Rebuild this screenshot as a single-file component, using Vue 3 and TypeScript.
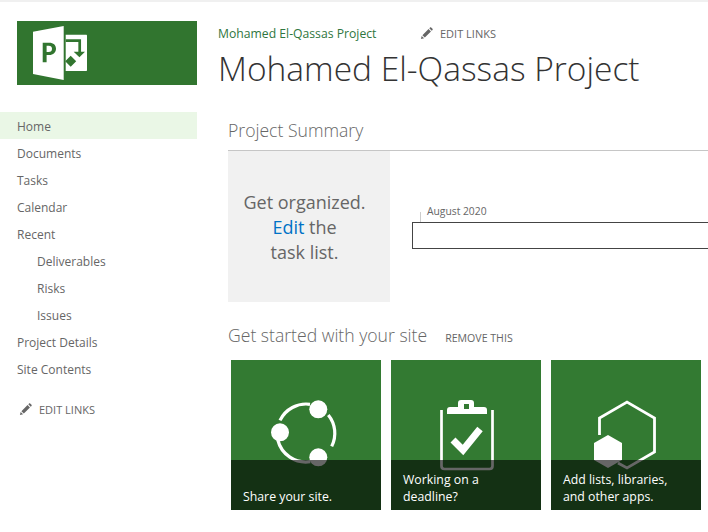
<script setup lang="ts">
interface NavItem {
  label: string;
  sub?: boolean;
  active?: boolean;
}

const navItems: NavItem[] = [
  { label: "Home", active: true },
  { label: "Documents" },
  { label: "Tasks" },
  { label: "Calendar" },
  { label: "Recent" },
  { label: "Deliverables", sub: true },
  { label: "Risks", sub: true },
  { label: "Issues", sub: true },
  { label: "Project Details" },
  { label: "Site Contents" },
];

const pencil = "M1 13l.8-3.4 2.6 2.6zM2.600 8.800l6.600-6.600 2.600 2.600-6.600 6.600zM10 1.400l.9-.9c.3-.3.8-.3 1.100 0l1.500 1.500c.3.3.3.8 0 1.100l-.9.9z";
</script>

<template>
  <div class="page">
    <aside class="side">
      <div class="logo">
        <svg width="56" height="56" viewBox="0 0 56 56">
          <path d="M0 6.700 30.700 1v54L0 49z" fill="#fff" />
          <path d="M9.700 17.700h6.500c4.200 0 6.800 2.300 6.800 6s-2.800 6.300-6.800 6.300h-2.600v7.300H9.700zm3.900 3.100V27h2c2.200 0 3.400-1.100 3.400-3.200s-1.200-3-3.300-3z" fill="#31752f" />
          <path d="M32.700 9.700H53c.6 0 1 .4 1 1V45c0 .6-.4 1-1 1H32.700z" fill="#fff" />
          <path d="M32.700 15.700h14v12" fill="none" stroke="#31752f" stroke-width="2.700" />
          <path d="M40.700 26.700H52L46.400 32.300zM37.700 30.800l5.500 5.500-5.500 5.500-5.500-5.500z" fill="#31752f" />
        </svg>
      </div>
      <nav class="nav">
        <a
          v-for="item in navItems"
          :key="item.label"
          class="nav-item"
          :class="{ active: item.active, sub: item.sub }"
        >{{ item.label }}</a>
      </nav>
      <div class="edit side-edit">
        <svg width="13" height="13" viewBox="0 0 14 14"><path :d="pencil" fill="#666" /></svg>
        <span>EDIT LINKS</span>
      </div>
    </aside>

    <main class="main">
      <header class="head">
        <div class="crumbs">
          <a class="crumb">Mohamed El-Qassas Project</a>
          <div class="edit">
            <svg width="13" height="13" viewBox="0 0 14 14"><path :d="pencil" fill="#666" /></svg>
            <span>EDIT LINKS</span>
          </div>
        </div>
        <h1>Mohamed El-Qassas Project</h1>
      </header>

      <section class="body">
        <h2 class="summary-title">Project Summary</h2>
        <div class="summary">
          <div class="promo">Get organized.<br /><a>Edit</a> the<br />task list.</div>
          <div class="timeline">
            <div class="month">August 2020</div>
            <div class="bar"></div>
          </div>
        </div>

        <div class="started">
          <h2>Get started with your site</h2>
          <a>REMOVE THIS</a>
        </div>

        <div class="tiles">
          <div class="tile">
            <svg class="tile-icon" width="150" height="150" viewBox="0 0 150 150">
              <g fill="none" stroke="#fff" stroke-width="3.200">
                <path d="M49 60.400A29 29 0 0 1 79 44.300" />
                <path d="M97.300 55A29 29 0 0 1 100.700 86.400" />
                <path d="M46.800 80A29 29 0 0 0 79.300 101.700" />
              </g>
              <circle cx="87.300" cy="49.300" r="9" fill="#fff" />
              <circle cx="49" cy="72.300" r="9" fill="#fff" />
              <circle cx="87.300" cy="97.300" r="9" fill="#fff" />
            </svg>
            <div class="tile-label"><span>Share your site.</span></div>
          </div>
          <div class="tile">
            <svg class="tile-icon" width="150" height="150" viewBox="0 0 150 150">
              <path d="M50.500 50v56c0 2 1 3 3 3h45c2 0 3-1 3-3V50" fill="none" stroke="#fff" stroke-width="2.700" />
              <path d="M56 54v-4c0-2 1-3 3-3h8v-4c0-2 1-3 3-3h10c2 0 3 1 3 3v4h10c2 0 3 1 3 3v4z" fill="#fff" />
              <rect x="73" y="44" width="5" height="5" fill="#337a32" />
              <path d="M62 80l10 10 17-21" fill="none" stroke="#fff" stroke-width="7" />
            </svg>
            <div class="tile-label"><span>Working on a<br />deadline?</span></div>
          </div>
          <div class="tile">
            <svg class="tile-icon" width="150" height="150" viewBox="0 0 150 150">
              <path d="M48.500 75V58L76 42l27.500 16v34L76 108l-9-5" fill="none" stroke="#fff" stroke-width="2.800" />
              <path d="M57 75l14 8v17l-14 8-14-8V83z" fill="#fff" />
            </svg>
            <div class="tile-label"><span>Add lists, libraries,<br />and other apps.</span></div>
          </div>
        </div>
      </section>
    </main>
  </div>
</template>

<style>
html,
body {
  margin: 0;
  background: #fff;
}
</style>

<style scoped>
.page {
  display: flex;
  width: 708px;
  height: 532px;
  box-sizing: border-box;
  border-top: 2px solid #f0f0f0;
  overflow: hidden;
  font-family: "Open Sans", "Noto Sans", sans-serif;
  color: #666;
}

.side {
  width: 197px;
  flex: none;
}

.logo {
  display: flex;
  align-items: center;
  height: 64px;
  margin: 19px 0 0 17px;
  padding-left: 16px;
  box-sizing: border-box;
  background: #31752f;
}

.nav {
  display: flex;
  flex-direction: column;
  margin-top: 27px;
}

.nav-item {
  height: 27px;
  line-height: 29px;
  padding-left: 17px;
  font-size: 12px;
  color: #666;
}

.nav-item.active {
  background: #eaf7e6;
}

.nav-item.sub {
  padding-left: 37px;
}

.edit {
  display: flex;
  align-items: center;
  gap: 7px;
  font-size: 11px;
  color: #666;
}

.side-edit {
  margin: 20px 0 0 19px;
}

.main {
  flex: 1;
  min-width: 0;
  padding-left: 21px;
}

.head {
  padding-top: 22px;
}

.crumbs {
  display: flex;
  align-items: center;
  gap: 42px;
  height: 18px;
}

.crumb {
  width: 160px;
  font-size: 12.200px;
  white-space: nowrap;
  color: #2f7640;
}

h1 {
  margin: 3px 0 0;
  font-size: 33.500px;
  line-height: 46px;
  font-weight: 300;
  white-space: nowrap;
  color: #333;
}

.body {
  margin-top: 28px;
  padding-left: 10px;
}

.summary-title {
  margin: 0 -10px 0 0;
  height: 31px;
  line-height: 22px;
  font-size: 17.600px;
  font-weight: 300;
  color: #666;
  border-bottom: 1px solid #c6c6c6;
}

.summary {
  display: flex;
  height: 151px;
}

.promo {
  width: 162px;
  flex: none;
  box-sizing: border-box;
  padding: 39px 9px 0 0;
  background: #f1f1f1;
  text-align: center;
  font-size: 18px;
  line-height: 25px;
  color: #666;
}

.promo a {
  color: #0072c6;
}

.timeline {
  flex: 1;
  padding: 53px 0 0 22px;
  margin-right: -30px;
}

.month {
  position: relative;
  height: 18px;
  padding-left: 15px;
  line-height: 14px;
  font-size: 10.300px;
  color: #666;
}

.month::before {
  content: "";
  position: absolute;
  left: 8px;
  top: 8px;
  width: 1px;
  height: 10px;
  background: #ccc;
}

.bar {
  height: 25px;
  border: 1px solid #444;
  background: #fff;
}

.started {
  display: flex;
  align-items: baseline;
  gap: 18px;
  margin-top: 19px;
  height: 39px;
}

.started h2 {
  margin: 0;
  font-size: 17.600px;
  line-height: 28px;
  font-weight: 300;
  color: #666;
}

.started a {
  font-size: 10.600px;
  color: #666;
}

.tiles {
  display: flex;
  gap: 10px;
  padding-left: 3px;
}

.tile {
  position: relative;
  width: 150px;
  height: 150px;
  flex: none;
  background: #337a32;
  overflow: hidden;
}

.tile-icon {
  display: block;
}

.tile-label {
  position: absolute;
  left: 0;
  right: 0;
  bottom: 0;
  height: 50px;
  box-sizing: border-box;
  display: flex;
  align-items: flex-end;
  padding: 0 12px 5px;
  background: rgba(0, 0, 0, 0.6);
  font-size: 12.300px;
  line-height: 17px;
  color: #fff;
}
</style>
